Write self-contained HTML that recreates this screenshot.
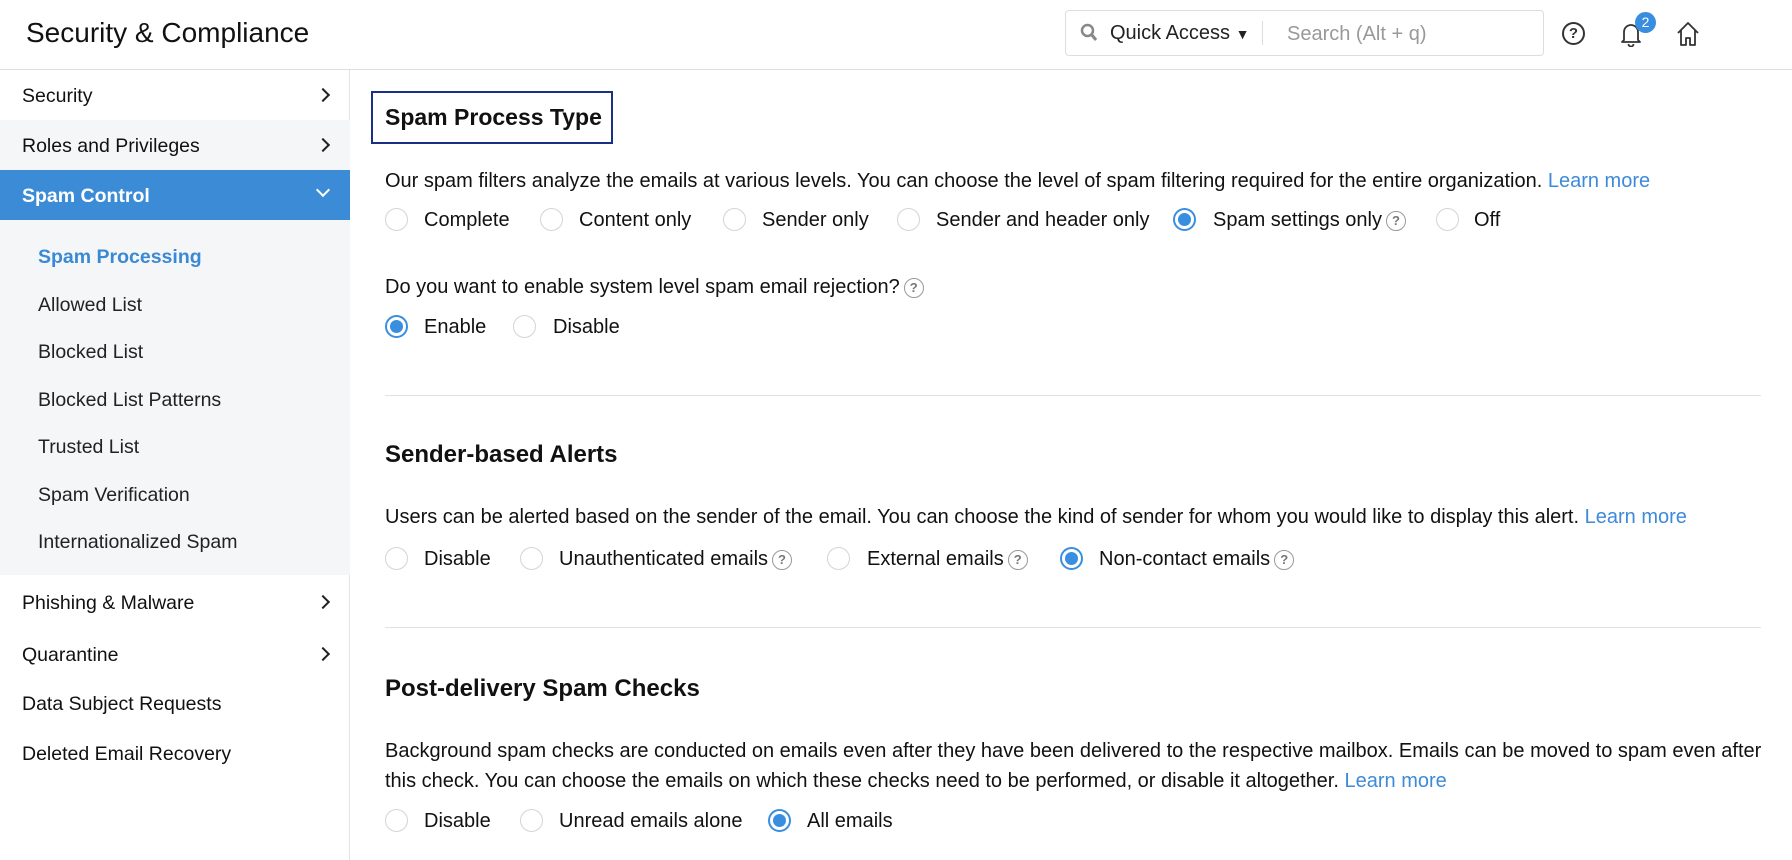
<!DOCTYPE html>
<html><head><meta charset="utf-8"><style>
*{margin:0;padding:0;box-sizing:border-box}
body{width:1792px;height:860px;overflow:hidden;background:#fff;font-family:"Liberation Sans",sans-serif;color:#111;position:relative;font-size:20px}
.a{position:absolute;white-space:nowrap}
.hdr{position:absolute;left:0;top:0;width:1792px;height:70px;border-bottom:1px solid #ddd}
.side{position:absolute;left:0;top:70px;width:350px;height:790px;border-right:1px solid #e4e4e4}
.nav{position:absolute;left:0;width:350px;height:50px;line-height:52px;padding-left:22px;font-size:19.5px}
.chev{position:absolute;right:22px;top:20px;width:10px;height:10px;border-right:2px solid #222;border-top:2px solid #222;transform:rotate(45deg)}
.sub{position:absolute;left:38px;font-size:19.5px;color:#222;line-height:24px;margin-top:1px}
.r{position:absolute;width:23px;height:23px;border:1.5px solid #d4d4d4;border-radius:50%;background:#fff}
.r.on{border:2px solid #3a8ee0}
.r.on:after{content:"";position:absolute;left:3px;top:3px;width:13px;height:13px;border-radius:50%;background:#3a8ee0}
.t{margin-top:3px}
.q{display:inline-block;width:20px;height:20px;border:1.5px solid #999;border-radius:50%;font-size:13px;line-height:17px;text-align:center;color:#777;font-weight:bold;vertical-align:middle;margin-left:4px}
.h{position:absolute;left:385px;font-size:23px;font-weight:bold;color:#111}
.lm{color:#3d8ad8}
.div{position:absolute;left:385px;width:1376px;height:1px;background:#e2e2e2}
</style></head><body>
<div class="hdr">
<div class="a" style="left:26px;top:17px;font-size:28px;color:#111">Security &amp; Compliance</div>
<div class="a" style="left:1065px;top:10px;width:479px;height:46px;border:1px solid #ddd;border-radius:4px"></div>
<svg class="a" style="left:1080px;top:23px" width="18" height="20" viewBox="0 0 18 20"><circle cx="7.5" cy="7.5" r="5.5" fill="none" stroke="#888" stroke-width="2.5"/><line x1="11.5" y1="11.5" x2="16" y2="17" stroke="#888" stroke-width="3"/></svg>
<div class="a" style="left:1110px;top:22px;font-size:20px;color:#222">Quick Access <span style="font-size:14px">▼</span></div>
<div class="a" style="left:1262px;top:21px;width:1px;height:24px;background:#ddd"></div>
<div class="a" style="left:1287px;top:23px;font-size:20px;color:#999">Search (Alt + q)</div>
<div class="a" style="left:1562px;top:22px;width:23px;height:23px;border:2px solid #333;border-radius:50%;text-align:center;font-size:15px;font-weight:bold;line-height:19px;color:#333">?</div>
<svg class="a" style="left:1619px;top:21px" width="24" height="26" viewBox="0 0 24 26"><path d="M5 19 L5 11 A7 7 0 0 1 19 11 L19 19 L21 21 L3 21 Z" fill="none" stroke="#333" stroke-width="1.8" stroke-linejoin="round"/><path d="M9.5 23 A2.5 2.5 0 0 0 14.5 23" fill="none" stroke="#333" stroke-width="1.8"/></svg>
<div class="a" style="left:1635px;top:12px;width:21px;height:21px;border-radius:50%;background:#3a8ee0;color:#fff;font-size:14px;text-align:center;line-height:21px">2</div>
<svg class="a" style="left:1676px;top:21px" width="24" height="26" viewBox="0 0 24 26"><path d="M2 12 L12 2 L22 12 M5 9 L5 24 L10 24 L10 17 L14 17 L14 24 L19 24 L19 9" fill="none" stroke="#333" stroke-width="1.8" stroke-linejoin="round"/></svg>
</div>

<div class="side">
<div class="nav" style="top:0">Security<i class="chev"></i></div>
<div class="nav" style="top:50px;background:#f5f6f8">Roles and Privileges<i class="chev"></i></div>
<div class="nav" style="top:100px;background:#3c8bd7;color:#fff;font-weight:bold">Spam Control<i class="chev" style="border-color:#fff;transform:rotate(135deg);top:15px"></i></div>
<div class="a" style="left:0;top:150px;width:350px;height:355px;background:#f5f6f8"></div>
<div class="sub" style="top:174px;color:#3a89d4;font-weight:bold">Spam Processing</div>
<div class="sub" style="top:222px">Allowed List</div>
<div class="sub" style="top:269px">Blocked List</div>
<div class="sub" style="top:317px">Blocked List Patterns</div>
<div class="sub" style="top:364px">Trusted List</div>
<div class="sub" style="top:412px">Spam Verification</div>
<div class="sub" style="top:459px">Internationalized Spam</div>
<div class="nav" style="top:507px">Phishing &amp; Malware<i class="chev"></i></div>
<div class="nav" style="top:559px">Quarantine<i class="chev"></i></div>
<div class="nav" style="top:608px">Data Subject Requests</div>
<div class="nav" style="top:658px">Deleted Email Recovery</div>
</div>

<div class="a" style="left:371px;top:91px;width:242px;height:53px;border:2px solid #1a2f86"></div>
<div class="h" style="top:104px">Spam Process Type</div>
<div class="a t" style="left:385px;top:167px">Our spam filters analyze the emails at various levels. You can choose the level of spam filtering required for the entire organization. <span class="lm">Learn more</span></div>
<div class="r" style="left:385px;top:208px"></div><div class="a t" style="left:424px;top:206px">Complete</div>
<div class="r" style="left:540px;top:208px"></div><div class="a t" style="left:579px;top:206px">Content only</div>
<div class="r" style="left:723px;top:208px"></div><div class="a t" style="left:762px;top:206px">Sender only</div>
<div class="r" style="left:897px;top:208px"></div><div class="a t" style="left:936px;top:206px">Sender and header only</div>
<div class="r on" style="left:1173px;top:208px"></div><div class="a t" style="left:1213px;top:206px">Spam settings only<span class="q">?</span></div>
<div class="r" style="left:1436px;top:208px"></div><div class="a t" style="left:1474px;top:206px">Off</div>

<div class="a t" style="left:385px;top:273px">Do you want to enable system level spam email rejection?<span class="q">?</span></div>
<div class="r on" style="left:385px;top:315px"></div><div class="a t" style="left:424px;top:313px">Enable</div>
<div class="r" style="left:513px;top:315px"></div><div class="a t" style="left:553px;top:313px">Disable</div>

<div class="div" style="top:395px"></div>
<div class="h" style="top:441px;font-size:24px">Sender-based Alerts</div>
<div class="a t" style="left:385px;top:503px">Users can be alerted based on the sender of the email. You can choose the kind of sender for whom you would like to display this alert. <span class="lm">Learn more</span></div>
<div class="r" style="left:385px;top:547px"></div><div class="a t" style="left:424px;top:545px">Disable</div>
<div class="r" style="left:520px;top:547px"></div><div class="a t" style="left:559px;top:545px">Unauthenticated emails<span class="q">?</span></div>
<div class="r" style="left:827px;top:547px"></div><div class="a t" style="left:867px;top:545px">External emails<span class="q">?</span></div>
<div class="r on" style="left:1060px;top:547px"></div><div class="a t" style="left:1099px;top:545px">Non-contact emails<span class="q">?</span></div>

<div class="div" style="top:627px"></div>
<div class="h" style="top:675px;font-size:24px">Post-delivery Spam Checks</div>
<div class="a t" style="left:385px;top:737px">Background spam checks are conducted on emails even after they have been delivered to the respective mailbox. Emails can be moved to spam even after</div>
<div class="a t" style="left:385px;top:767px">this check. You can choose the emails on which these checks need to be performed, or disable it altogether. <span class="lm">Learn more</span></div>
<div class="r" style="left:385px;top:809px"></div><div class="a t" style="left:424px;top:807px">Disable</div>
<div class="r" style="left:520px;top:809px"></div><div class="a t" style="left:559px;top:807px">Unread emails alone</div>
<div class="r on" style="left:768px;top:809px"></div><div class="a t" style="left:807px;top:807px">All emails</div>
</body></html>
